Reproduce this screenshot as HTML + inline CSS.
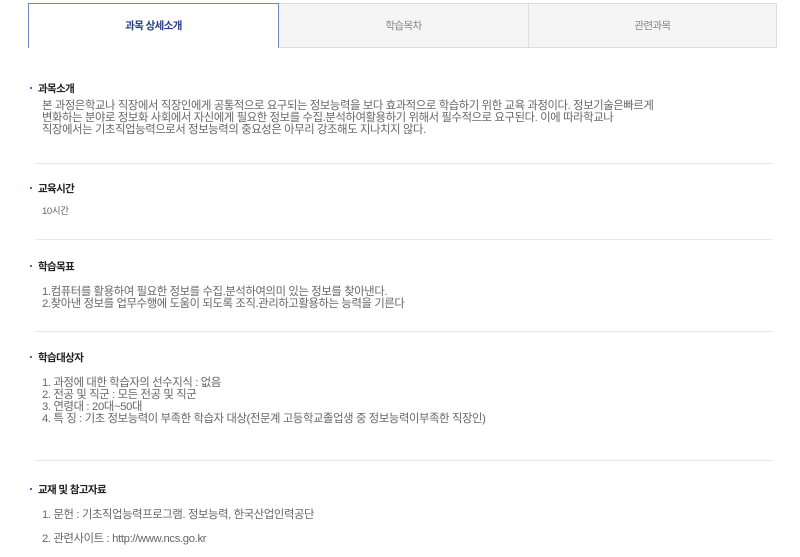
<!DOCTYPE html>
<html><head><meta charset="utf-8"><style>
*{margin:0;padding:0;box-sizing:border-box}
body{width:800px;height:557px;background:#fff;position:relative;overflow:hidden;font-family:"Liberation Sans","Noto Sans CJK KR","NanumGothic",sans-serif;color:#555}
.tab{position:absolute;top:3px;height:45px;border:1px solid #ddd;background:#f5f5f5;font-size:10.5px;color:#888;text-align:center;line-height:44px;letter-spacing:-0.6px}
.tab.on{background:#fff;border:1px solid #6f86c6;border-bottom:none;color:#2b3f86;font-weight:bold}
.h{position:absolute;left:38px;font-size:10.5px;color:#222;font-weight:bold;letter-spacing:-0.6px}
.h:before{content:"";position:absolute;left:-8px;top:6px;width:2px;height:2px;background:#4a67c5}
.t{position:absolute;left:42px;font-size:11.3px;line-height:12px;color:#666;letter-spacing:-0.35px;white-space:nowrap}
.d{position:absolute;left:36px;width:736px;height:1px;background:#e8e8e8}
</style></head><body>
<div class="tab on" style="left:28px;width:251px">과목 상세소개</div>
<div class="tab" style="left:279px;width:250px;border-left:none">학습목차</div>
<div class="tab" style="left:528px;width:249px">관련과목</div>

<div class="h" style="top:81px">과목소개</div>
<div class="t" style="top:100px">본 과정은학교나 직장에서 직장인에게 공통적으로 요구되는 정보능력을 보다 효과적으로 학습하기 위한 교육 과정이다. 정보기술은빠르게<br>변화하는 분야로 정보화 사회에서 자신에게 필요한 정보를 수집.분석하여활용하기 위해서 필수적으로 요구된다. 이에 따라학교나<br>직장에서는 기초직업능력으로서 정보능력의 중요성은 아무리 강조해도 지나치지 않다.</div>
<div class="d" style="top:163px"></div>

<div class="h" style="top:181px">교육시간</div>
<div class="t" style="top:206px;font-size:9.5px">10시간</div>
<div class="d" style="top:239px"></div>

<div class="h" style="top:259px">학습목표</div>
<div class="t" style="top:286px">1.컴퓨터를 활용하여 필요한 정보를 수집.분석하여의미 있는 정보를 찾아낸다.<br>2.찾아낸 정보를 업무수행에 도움이 되도록 조직.관리하고활용하는 능력을 기른다</div>
<div class="d" style="top:331px"></div>

<div class="h" style="top:350px">학습대상자</div>
<div class="t" style="top:377px">1. 과정에 대한 학습자의 선수지식 : 없음<br>2. 전공 및 직군 : 모든 전공 및 직군<br>3. 연령대 : 20대~50대<br>4. 특 징 : 기초 정보능력이 부족한 학습자 대상(전문계 고등학교졸업생 중 정보능력이부족한 직장인)</div>
<div class="d" style="top:460px"></div>

<div class="h" style="top:482px">교재 및 참고자료</div>
<div class="t" style="top:509px">1. 문헌 : 기초직업능력프로그램. 정보능력, 한국산업인력공단</div>
<div class="t" style="top:533px">2. 관련사이트 : http://www.ncs.go.kr</div>
</body></html>
